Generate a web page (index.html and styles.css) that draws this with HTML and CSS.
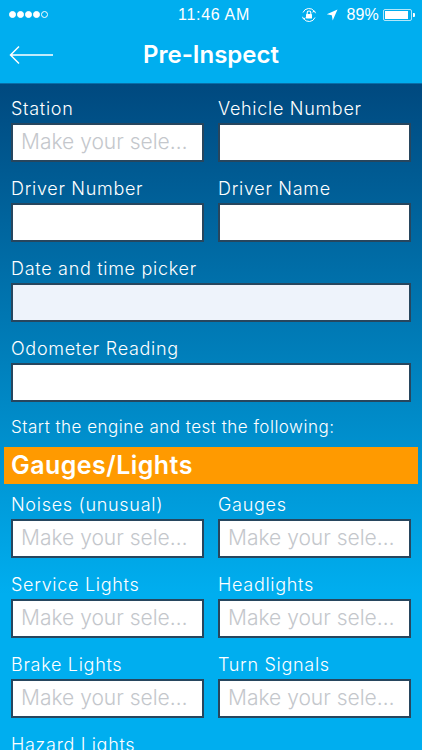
FILE: index.html
```html
<!DOCTYPE html>
<html lang="en">
<head>
<meta charset="utf-8">
<title>Pre-Inspect</title>
<link rel="stylesheet" href="styles.css">
</head>
<body>
<div class="app">
  <header class="top">
    <div class="status">
      <div class="signal"><i></i><i></i><i></i><i></i><i class="off"></i></div>
      <div class="time">11:46 AM</div>
      <div class="status-right">
        <svg class="lock" width="16" height="16" viewBox="0 0 16 16" fill="none" stroke="#fff" stroke-width="1"><path d="M14 10.500A6.400 6.400 0 0 1 2.600 11.500M2 5.500A6.400 6.400 0 0 1 13.400 4.500"/><path d="M1.500 9.800 2.500 12 4.500 10.800M14.500 6.200 13.500 4 11.500 5.200"/><rect x="5" y="7" width="6" height="4.500" rx=".6" fill="#fff" stroke="none"/><path d="M6.200 7V5.800a1.800 1.800 0 0 1 3.600 0V7" stroke-width="1.100"/></svg>
        <svg class="arrow" width="12" height="12" viewBox="0 0 12 12"><path d="M11.500.5 .8 5.300l5 .9.900 5.300z" fill="#fff"/></svg>
        <span class="pct">89%</span>
        <div class="battery"><div class="cell"><div class="fill"></div></div><div class="nub"></div></div>
      </div>
    </div>
    <div class="nav">
      <svg class="back" width="44" height="20" viewBox="0 0 44 20" fill="none" stroke="#fff" stroke-width="1.500"><path d="M44 10H1.500M10 1.500 1.500 10l8.500 8.500"/></svg>
      <h1>Pre-Inspect</h1>
    </div>
  </header>
  <main class="form">
    <div class="grid head">
      <div class="field"><label>Station</label><div class="box ph">Make your sele…</div></div>
      <div class="field"><label>Vehicle Number</label><div class="box"></div></div>
      <div class="field"><label>Driver Number</label><div class="box"></div></div>
      <div class="field"><label>Driver Name</label><div class="box"></div></div>
      <div class="field wide"><label>Date and time picker</label><div class="box tint"></div></div>
      <div class="field wide"><label>Odometer Reading</label><div class="box"></div></div>
    </div>
    <p class="note">Start the engine and test the following:</p>
    <h2 class="section">Gauges/Lights</h2>
    <div class="grid checks">
      <div class="field"><label>Noises (unusual)</label><div class="box ph">Make your sele…</div></div>
      <div class="field"><label>Gauges</label><div class="box ph">Make your sele…</div></div>
      <div class="field"><label>Service Lights</label><div class="box ph">Make your sele…</div></div>
      <div class="field"><label>Headlights</label><div class="box ph">Make your sele…</div></div>
      <div class="field"><label>Brake Lights</label><div class="box ph">Make your sele…</div></div>
      <div class="field"><label>Turn Signals</label><div class="box ph">Make your sele…</div></div>
      <div class="field"><label>Hazard Lights</label><div class="box ph">Make your sele…</div></div>
    </div>
  </main>
</div>
</body>
</html>
```
FILE: styles.css
```css
* { box-sizing: border-box; }
html, body { margin: 0; height: 750px; overflow: hidden; }
body { font-family: Inter, Lato, sans-serif; color: #fff; background: #00aeef; }
.app { width: 422px; height: 750px; overflow: hidden; }
.top { height: 84px; background: #00aeef; border-bottom: 1px solid #0a6ea8; }
.status { height: 29px; padding: 0 7px 0 9px; display: flex; align-items: center; justify-content: space-between; position: relative; }
.signal { display: flex; gap: 1px; width: 46px; align-items: center; }
.signal i { width: 7px; height: 7px; border-radius: 50%; background: #fff; border: 1px solid #fff; }
.signal i.off { background: transparent; border-width: .75px; }
.time { position: absolute; left: 178px; font: 16px "Liberation Sans", sans-serif; letter-spacing: .7px; }
.status-right { display: flex; align-items: center; }
.lock { margin-right: 9px; }
.arrow { margin-right: 8px; }
.pct { font: 16px "Liberation Sans", sans-serif; margin-right: 4px; letter-spacing: .2px; }
.battery { display: flex; align-items: center; }
.cell { width: 29px; height: 12px; border: 1px solid rgba(255,255,255,.7); border-radius: 2px; padding: 1px; }
.fill { width: 90%; height: 100%; background: #fff; }
.nub { width: 2px; height: 4px; background: #fff; margin-left: 1px; border-radius: 0 1px 1px 0; }
.nav { height: 54px; display: flex; align-items: center; justify-content: center; position: relative; padding-bottom: 3px; }
.back { position: absolute; left: 9px; top: 16px; }
h1 { margin: 0; font-size: 24px; font-weight: 600; line-height: 1; }
.form { height: 666px; padding: 0 11px; background: linear-gradient(#00497f 0, #00aeef 510px); overflow: hidden; }
.grid { display: grid; grid-template-columns: 193px 193px; column-gap: 14px; row-gap: 14px; }
.head { padding-top: 12px; }
.checks { padding-top: 8px; }
.field { display: flex; flex-direction: column; }
.wide { grid-column: 1 / -1; }
label { font-size: 18px; font-weight: 300; line-height: 26px; height: 27px; letter-spacing: .7px; }
.box { height: 39px; background: #fff; border: 2px solid #27465e; padding: 0 8px; font-size: 21px; font-weight: 300; line-height: 34px; color: #c4c7cc; white-space: nowrap; }
.tint { background: #eef3fb; }
.note { margin: 14px 0 0; font-size: 17px; font-weight: 300; line-height: 22px; height: 25px; letter-spacing: .5px; }
.section { margin: 6px -7px 0; height: 37px; background: #ff9a00; padding-left: 7px; font-size: 25px; line-height: 36px; font-weight: 600; letter-spacing: .45px; }
```
